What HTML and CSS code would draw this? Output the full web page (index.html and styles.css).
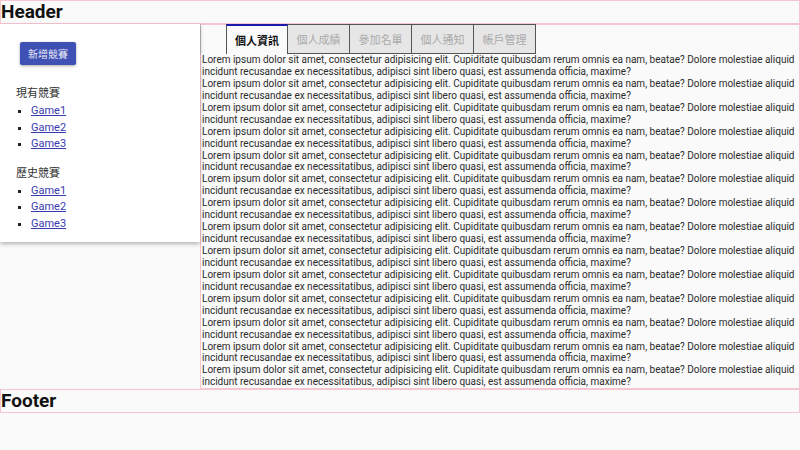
FILE: index.html
```html
<!DOCTYPE html>
<html lang="zh-Hant">
<head>
<meta charset="utf-8">
<title>Page</title>
<link rel="stylesheet" href="styles.css">
</head>
<body>
<header class="header"><h1 class="title">Header</h1></header>
<div class="middle">
  <aside class="sidebar">
    <button class="btn-add">新增競賽</button>
    <div class="group">
      <div class="group-title">現有競賽</div>
      <ul class="game-list">
        <li><a href="#">Game1</a></li>
        <li><a href="#">Game2</a></li>
        <li><a href="#">Game3</a></li>
      </ul>
    </div>
    <div class="group">
      <div class="group-title">歷史競賽</div>
      <ul class="game-list">
        <li><a href="#">Game1</a></li>
        <li><a href="#">Game2</a></li>
        <li><a href="#">Game3</a></li>
      </ul>
    </div>
  </aside>
  <main class="main">
    <nav class="tabs">
      <div class="tab active">個人資訊</div>
      <div class="tab">個人成績</div>
      <div class="tab">參加名單</div>
      <div class="tab">個人通知</div>
      <div class="tab">帳戶管理</div>
    </nav>
    <div class="content">
      <p class="para">Lorem ipsum dolor sit amet, consectetur adipisicing elit. Cupiditate quibusdam rerum omnis ea nam, beatae? Dolore molestiae aliquid incidunt recusandae ex necessitatibus, adipisci sint libero quasi, est assumenda officia, maxime?</p>
      <p class="para">Lorem ipsum dolor sit amet, consectetur adipisicing elit. Cupiditate quibusdam rerum omnis ea nam, beatae? Dolore molestiae aliquid incidunt recusandae ex necessitatibus, adipisci sint libero quasi, est assumenda officia, maxime?</p>
      <p class="para">Lorem ipsum dolor sit amet, consectetur adipisicing elit. Cupiditate quibusdam rerum omnis ea nam, beatae? Dolore molestiae aliquid incidunt recusandae ex necessitatibus, adipisci sint libero quasi, est assumenda officia, maxime?</p>
      <p class="para">Lorem ipsum dolor sit amet, consectetur adipisicing elit. Cupiditate quibusdam rerum omnis ea nam, beatae? Dolore molestiae aliquid incidunt recusandae ex necessitatibus, adipisci sint libero quasi, est assumenda officia, maxime?</p>
      <p class="para">Lorem ipsum dolor sit amet, consectetur adipisicing elit. Cupiditate quibusdam rerum omnis ea nam, beatae? Dolore molestiae aliquid incidunt recusandae ex necessitatibus, adipisci sint libero quasi, est assumenda officia, maxime?</p>
      <p class="para">Lorem ipsum dolor sit amet, consectetur adipisicing elit. Cupiditate quibusdam rerum omnis ea nam, beatae? Dolore molestiae aliquid incidunt recusandae ex necessitatibus, adipisci sint libero quasi, est assumenda officia, maxime?</p>
      <p class="para">Lorem ipsum dolor sit amet, consectetur adipisicing elit. Cupiditate quibusdam rerum omnis ea nam, beatae? Dolore molestiae aliquid incidunt recusandae ex necessitatibus, adipisci sint libero quasi, est assumenda officia, maxime?</p>
      <p class="para">Lorem ipsum dolor sit amet, consectetur adipisicing elit. Cupiditate quibusdam rerum omnis ea nam, beatae? Dolore molestiae aliquid incidunt recusandae ex necessitatibus, adipisci sint libero quasi, est assumenda officia, maxime?</p>
      <p class="para">Lorem ipsum dolor sit amet, consectetur adipisicing elit. Cupiditate quibusdam rerum omnis ea nam, beatae? Dolore molestiae aliquid incidunt recusandae ex necessitatibus, adipisci sint libero quasi, est assumenda officia, maxime?</p>
      <p class="para">Lorem ipsum dolor sit amet, consectetur adipisicing elit. Cupiditate quibusdam rerum omnis ea nam, beatae? Dolore molestiae aliquid incidunt recusandae ex necessitatibus, adipisci sint libero quasi, est assumenda officia, maxime?</p>
      <p class="para">Lorem ipsum dolor sit amet, consectetur adipisicing elit. Cupiditate quibusdam rerum omnis ea nam, beatae? Dolore molestiae aliquid incidunt recusandae ex necessitatibus, adipisci sint libero quasi, est assumenda officia, maxime?</p>
      <p class="para">Lorem ipsum dolor sit amet, consectetur adipisicing elit. Cupiditate quibusdam rerum omnis ea nam, beatae? Dolore molestiae aliquid incidunt recusandae ex necessitatibus, adipisci sint libero quasi, est assumenda officia, maxime?</p>
      <p class="para">Lorem ipsum dolor sit amet, consectetur adipisicing elit. Cupiditate quibusdam rerum omnis ea nam, beatae? Dolore molestiae aliquid incidunt recusandae ex necessitatibus, adipisci sint libero quasi, est assumenda officia, maxime?</p>
      <p class="para">Lorem ipsum dolor sit amet, consectetur adipisicing elit. Cupiditate quibusdam rerum omnis ea nam, beatae? Dolore molestiae aliquid incidunt recusandae ex necessitatibus, adipisci sint libero quasi, est assumenda officia, maxime?</p>
    </div>
  </main>
</div>
<footer class="footer"><h1 class="title">Footer</h1></footer>
</body>
</html>
```
FILE: styles.css
```css
html, body {
  margin: 0;
  padding: 0;
  background: #fafafa;
  font-family: Roboto, "Noto Sans CJK TC", sans-serif;
  color: #222;
}
.header, .footer {
  border: 1px solid #f5c6cf;
}
.title {
  margin: 0;
  font-size: 19px;
  line-height: 22px;
  font-weight: 700;
  color: #111;
}
.middle {
  display: flex;
  align-items: flex-start;
}
.sidebar {
  width: 200px;
  flex: none;
  background: #fff;
  box-shadow: 0 2px 4px rgba(0,0,0,0.28);
  padding: 18px 0 10px 16px;
  box-sizing: border-box;
  position: relative;
  z-index: 1;
  font-size: 11px;
}
.btn-add {
  margin-left: 4px;
  width: 56px;
  height: 23px;
  border: none;
  border-radius: 2px;
  background: #3f51b5;
  color: #e8eaf6;
  font-family: Roboto, "Noto Sans CJK TC", sans-serif;
  font-size: 10px;
  padding: 0;
  box-shadow: 0 1px 3px rgba(0,0,0,0.35);
}
.group {
  margin-top: 22px;
}
.group + .group {
  margin-top: 14px;
}
.group-title {
  font-size: 11px;
  color: #333;
  line-height: 14px;
}
.game-list {
  margin: 2px 0 0 0;
  padding-left: 15px;
  list-style: square;
}
.game-list li {
  line-height: 16.5px;
  font-size: 11px;
}
.game-list a {
  color: #3a3ab0;
}
.main {
  flex: 1;
  border: 1px solid #f5c6cf;
  min-width: 0;
}
.tabs {
  display: flex;
  height: 30px;
  padding-left: 25px;
  border-left: 1px solid #bbb;
  margin-top: -1px;
  margin-left: -1px;
}
.tab {
  width: 62px;
  border: 1px solid #555;
  border-left: none;
  background: #e6e6e6;
  color: #aaa;
  font-size: 11px;
  display: flex;
  align-items: center;
  justify-content: center;
  box-sizing: border-box;
}
.tab.active {
  border-left: 1px solid #555;
  border-top: 2px solid #1a1aaa;
  border-bottom: none;
  background: #fafafa;
  color: #111;
  font-weight: 700;
}
.content {
  font-size: 10px;
  line-height: 11.93px;
  color: #2a2a2a;
  padding-left: 1px;
}
.para {
  margin: 0;
}
```
